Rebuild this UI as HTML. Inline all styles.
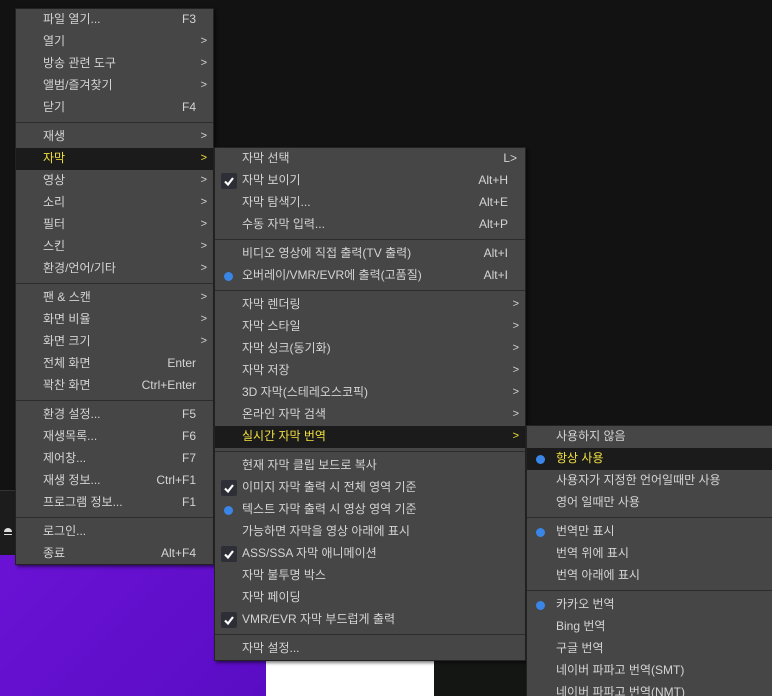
<!DOCTYPE html>
<html style="width:772px;height:696px;overflow:hidden"><head><meta charset="utf-8"><style>
*{margin:0;padding:0;box-sizing:border-box}
body{width:772px;height:696px;background:#121212;position:relative;overflow:hidden;font-family:"Liberation Sans","Noto Sans CJK KR",sans-serif;font-size:12px;color:#d4d4d4}
.bg{position:absolute}
.menu{position:absolute;background:#464646;border:1px solid #222;box-shadow:2px 2px 3px rgba(0,0,0,.5)}
.r{height:22px;line-height:21px;position:relative;white-space:nowrap}
.r .t{position:absolute;left:27px}
.r .k{position:absolute;right:17px}
.r .a{position:absolute;right:6px;font-size:11px}
.r.h{background:#1b1b1b;color:#f0e040}
.s{height:7px;position:relative}
.s:after{content:"";position:absolute;left:0;right:0;top:3px;height:1px;background:#2c2c2c}
.c{position:absolute;left:6px;top:3px;width:16px;height:16px;background:#2e2e36;border-radius:2px}
.c svg{position:absolute;left:2px;top:2px}
.d{position:absolute;left:9px;top:7px;width:9px;height:9px;border-radius:50%;background:#3a86e8}
</style></head><body>
<div class="bg" style="left:0;top:490px;width:15px;height:65px;background:#1c1c1c;border-top:1px solid #333"></div>
<div class="bg" style="left:4px;top:528px;width:8px;height:4px;background:#ddd;border-radius:4px 4px 0 0"></div>
<div class="bg" style="left:4px;top:534px;width:8px;height:1px;background:#ddd"></div>
<div class="bg" style="left:0;top:555px;width:266px;height:141px;background:linear-gradient(135deg,#6a12d4,#5a0cc4)"></div>
<div class="bg" style="left:266px;top:660px;width:168px;height:36px;background:#fff"></div>
<div class="bg" style="left:434px;top:660px;width:93px;height:36px;background:#141614"></div>

<div class="menu" style="left:15px;top:8px;width:199px;height:557px">
<div class="r"><span class="t">파일 열기...</span><span class="k">F3</span></div>
<div class="r"><span class="t">열기</span><span class="a">&gt;</span></div>
<div class="r"><span class="t">방송 관련 도구</span><span class="a">&gt;</span></div>
<div class="r"><span class="t">앨범/즐겨찾기</span><span class="a">&gt;</span></div>
<div class="r"><span class="t">닫기</span><span class="k">F4</span></div>
<div class="s"></div>
<div class="r"><span class="t">재생</span><span class="a">&gt;</span></div>
<div class="r h"><span class="t">자막</span><span class="a">&gt;</span></div>
<div class="r"><span class="t">영상</span><span class="a">&gt;</span></div>
<div class="r"><span class="t">소리</span><span class="a">&gt;</span></div>
<div class="r"><span class="t">필터</span><span class="a">&gt;</span></div>
<div class="r"><span class="t">스킨</span><span class="a">&gt;</span></div>
<div class="r"><span class="t">환경/언어/기타</span><span class="a">&gt;</span></div>
<div class="s"></div>
<div class="r"><span class="t">팬 &amp; 스캔</span><span class="a">&gt;</span></div>
<div class="r"><span class="t">화면 비율</span><span class="a">&gt;</span></div>
<div class="r"><span class="t">화면 크기</span><span class="a">&gt;</span></div>
<div class="r"><span class="t">전체 화면</span><span class="k">Enter</span></div>
<div class="r"><span class="t">꽉찬 화면</span><span class="k">Ctrl+Enter</span></div>
<div class="s"></div>
<div class="r"><span class="t">환경 설정...</span><span class="k">F5</span></div>
<div class="r"><span class="t">재생목록...</span><span class="k">F6</span></div>
<div class="r"><span class="t">제어창...</span><span class="k">F7</span></div>
<div class="r"><span class="t">재생 정보...</span><span class="k">Ctrl+F1</span></div>
<div class="r"><span class="t">프로그램 정보...</span><span class="k">F1</span></div>
<div class="s"></div>
<div class="r"><span class="t">로그인...</span></div>
<div class="r"><span class="t">종료</span><span class="k">Alt+F4</span></div>
</div>

<div class="menu" style="left:214px;top:147px;width:312px;height:514px">
<div class="r"><span class="t">자막 선택</span><span class="k" style="right:8px">L&gt;</span></div>
<div class="r"><span class="c"><svg width="12" height="12"><path d="M2 6.5L5 9.5L10 3" stroke="#fff" stroke-width="2.2" fill="none"/></svg></span><span class="t">자막 보이기</span><span class="k">Alt+H</span></div>
<div class="r"><span class="t">자막 탐색기...</span><span class="k">Alt+E</span></div>
<div class="r"><span class="t">수동 자막 입력...</span><span class="k">Alt+P</span></div>
<div class="s"></div>
<div class="r"><span class="t">비디오 영상에 직접 출력(TV 출력)</span><span class="k">Alt+I</span></div>
<div class="r"><span class="d"></span><span class="t">오버레이/VMR/EVR에 출력(고품질)</span><span class="k">Alt+I</span></div>
<div class="s"></div>
<div class="r"><span class="t">자막 렌더링</span><span class="a">&gt;</span></div>
<div class="r"><span class="t">자막 스타일</span><span class="a">&gt;</span></div>
<div class="r"><span class="t">자막 싱크(동기화)</span><span class="a">&gt;</span></div>
<div class="r"><span class="t">자막 저장</span><span class="a">&gt;</span></div>
<div class="r"><span class="t">3D 자막(스테레오스코픽)</span><span class="a">&gt;</span></div>
<div class="r"><span class="t">온라인 자막 검색</span><span class="a">&gt;</span></div>
<div class="r h"><span class="t">실시간 자막 번역</span><span class="a">&gt;</span></div>
<div class="s"></div>
<div class="r"><span class="t">현재 자막 클립 보드로 복사</span></div>
<div class="r"><span class="c"><svg width="12" height="12"><path d="M2 6.5L5 9.5L10 3" stroke="#fff" stroke-width="2.2" fill="none"/></svg></span><span class="t">이미지 자막 출력 시 전체 영역 기준</span></div>
<div class="r"><span class="d"></span><span class="t">텍스트 자막 출력 시 영상 영역 기준</span></div>
<div class="r"><span class="t">가능하면 자막을 영상 아래에 표시</span></div>
<div class="r"><span class="c"><svg width="12" height="12"><path d="M2 6.5L5 9.5L10 3" stroke="#fff" stroke-width="2.2" fill="none"/></svg></span><span class="t">ASS/SSA 자막 애니메이션</span></div>
<div class="r"><span class="t">자막 불투명 박스</span></div>
<div class="r"><span class="t">자막 페이딩</span></div>
<div class="r"><span class="c"><svg width="12" height="12"><path d="M2 6.5L5 9.5L10 3" stroke="#fff" stroke-width="2.2" fill="none"/></svg></span><span class="t">VMR/EVR 자막 부드럽게 출력</span></div>
<div class="s"></div>
<div class="r"><span class="t">자막 설정...</span></div>
</div>

<div class="menu" style="left:526px;top:425px;width:246px;height:271px;border-right:none;border-bottom:none">
<div class="r"><span class="t" style="left:29px">사용하지 않음</span></div>
<div class="r h"><span class="d"></span><span class="t" style="left:29px">항상 사용</span></div>
<div class="r"><span class="t" style="left:29px">사용자가 지정한 언어일때만 사용</span></div>
<div class="r"><span class="t" style="left:29px">영어 일때만 사용</span></div>
<div class="s"></div>
<div class="r"><span class="d"></span><span class="t" style="left:29px">번역만 표시</span></div>
<div class="r"><span class="t" style="left:29px">번역 위에 표시</span></div>
<div class="r"><span class="t" style="left:29px">번역 아래에 표시</span></div>
<div class="s"></div>
<div class="r"><span class="d"></span><span class="t" style="left:29px">카카오 번역</span></div>
<div class="r"><span class="t" style="left:29px">Bing 번역</span></div>
<div class="r"><span class="t" style="left:29px">구글 번역</span></div>
<div class="r"><span class="t" style="left:29px">네이버 파파고 번역(SMT)</span></div>
<div class="r"><span class="t" style="left:29px">네이버 파파고 번역(NMT)</span></div>
</div>
</body></html>
